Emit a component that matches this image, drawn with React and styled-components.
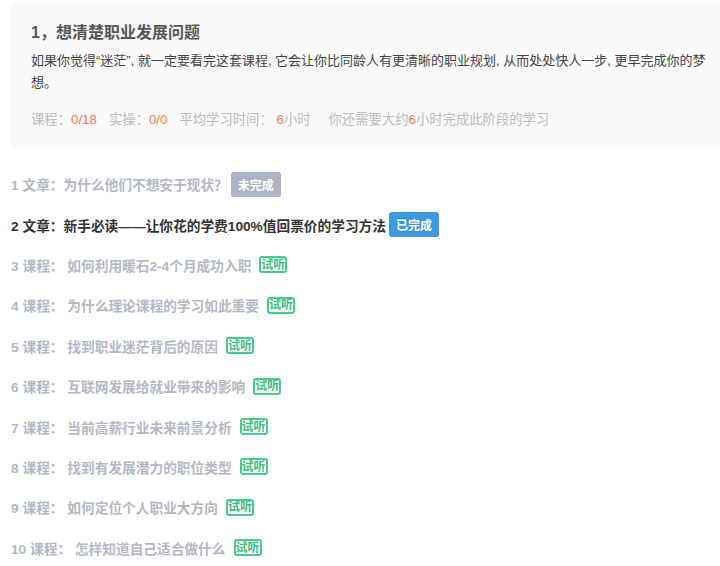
import styled, { createGlobalStyle } from 'styled-components'

const GlobalStyle = createGlobalStyle`
  body {
    margin: 0;
    background: #fff;
    font-family: "Liberation Sans", "Noto Sans CJK SC", Arial, sans-serif;
  }
`

const lessons = [
  { no: 1, kind: '文章：', title: '为什么他们不想安于现状？', status: 'todo' },
  { no: 2, kind: '文章：', title: '新手必读——让你花的学费100%值回票价的学习方法', status: 'done' },
  { no: 3, kind: '课程：', title: ' 如何利用暖石2-4个月成功入职', status: 'trial' },
  { no: 4, kind: '课程：', title: ' 为什么理论课程的学习如此重要', status: 'trial' },
  { no: 5, kind: '课程：', title: ' 找到职业迷茫背后的原因', status: 'trial' },
  { no: 6, kind: '课程：', title: ' 互联网发展给就业带来的影响', status: 'trial' },
  { no: 7, kind: '课程：', title: ' 当前高薪行业未来前景分析', status: 'trial' },
  { no: 8, kind: '课程：', title: ' 找到有发展潜力的职位类型', status: 'trial' },
  { no: 9, kind: '课程：', title: ' 如何定位个人职业大方向', status: 'trial' },
  { no: 10, kind: '课程：', title: ' 怎样知道自己适合做什么', status: 'trial' },
]

const App = () => {
  return (
    <>
      <GlobalStyle />
      <Page>
        <StageCard>
          <StageTitle>1，想清楚职业发展问题</StageTitle>
          <StageDesc>
            如果你觉得“迷茫”, 就一定要看完这套课程, 它会让你比同龄人有更清晰的职业规划, 从而处处快人一步, 更早完成你的梦想。
          </StageDesc>
          <Stats>
            <StatItem>课程：<Num>0/18</Num></StatItem>
            <StatItem>实操：<Num>0/0</Num></StatItem>
            <StatItem $wide>平均学习时间： <Num>6</Num>小时</StatItem>
            <StatItem>你还需要大约<Num>6</Num>小时完成此阶段的学习</StatItem>
          </Stats>
        </StageCard>

        <LessonList>
          {lessons.map(item => (
            <LessonRow key={item.no} $active={item.status === 'done'}>
              <span>{item.no} {item.kind}{item.title}</span>
              {item.status === 'todo' && <StatusTag $color="#adb3c4">未完成</StatusTag>}
              {item.status === 'done' && <StatusTag $color="#3d99e2">已完成</StatusTag>}
              {item.status === 'trial' && <TrialTag>试听</TrialTag>}
            </LessonRow>
          ))}
        </LessonList>
      </Page>
    </>
  )
}

const Page = styled.div`
  padding: 3px 0 0 11px;
`

const StageCard = styled.div`
  background-color: #fafafa;
  padding: 20px 8px 18px 20px;
`

const StageTitle = styled.h3`
  margin: 0;
  font-size: 16px;
  line-height: 20px;
  font-weight: bold;
  color: #555;
`

const StageDesc = styled.p`
  margin: 7px 0 0;
  font-size: 13px;
  line-height: 22px;
  color: #444;
`

const Stats = styled.div`
  display: flex;
  gap: 12px;
  margin-top: 16px;
  font-size: 13.33px;
  line-height: 20px;
  color: #bbb;
`

const StatItem = styled.span`
  white-space: pre;
  margin-right: ${props => (props.$wide ? '6px' : '0')};
`

const Num = styled.span`
  color: #ff7a52;
`

const LessonList = styled.ul`
  list-style: none;
  margin: 16px 0 0;
  padding: 0;
`

const LessonRow = styled.li`
  display: flex;
  align-items: center;
  height: 40.4px;
  font-size: 13.7px;
  font-weight: bold;
  white-space: pre;
  color: ${props => (props.$active ? '#333' : '#b3b8c5')};
`

const StatusTag = styled.span`
  display: inline-flex;
  align-items: center;
  justify-content: center;
  width: 50px;
  height: 25px;
  margin-left: 3px;
  border-radius: 3px;
  background-color: ${props => props.$color};
  color: #fff;
  font-size: 12px;
  font-weight: bold;
`

const TrialTag = styled.span`
  display: inline-flex;
  align-items: center;
  justify-content: center;
  box-sizing: border-box;
  height: 17px;
  padding: 0;
  margin-left: 8px;
  border: 2px solid #4ccb90;
  border-radius: 3px;
  color: #3fbf84;
  font-size: 12px;
  font-weight: bold;
  line-height: 1;
`

export default App
